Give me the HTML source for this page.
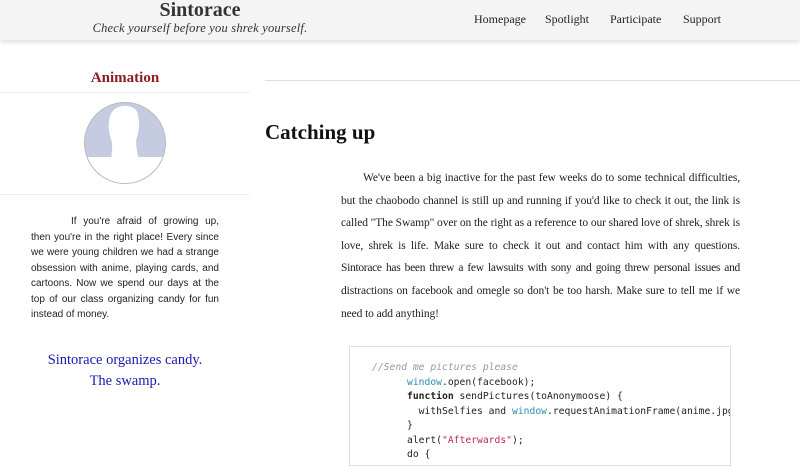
<!DOCTYPE html>
<html><head><style>
*{margin:0;padding:0;box-sizing:border-box}
body{width:800px;height:450px;overflow:hidden;background:#fff;font-family:"Liberation Serif",serif;position:relative}
.hdr{position:absolute;left:0;top:0;width:800px;height:40px;background:#f4f4f4;box-shadow:0 2px 5px rgba(0,0,0,.15)}
.t{position:absolute;left:0;width:400px;text-align:center;color:#333}
.nav{position:absolute;top:12px;font-size:12px;color:#222}
.ab{position:absolute}
.p div{text-align:justify;text-align-last:justify;white-space:nowrap}
.p div.l{text-align-last:left}
</style></head><body>
<div class="hdr">
<div class="t" style="top:-1px;font-size:20px;font-weight:bold">Sintorace</div>
<div class="t" style="top:21px;font-size:12.5px;font-style:italic;letter-spacing:.2px">Check yourself before you shrek yourself.</div>
<div class="nav" style="left:474px">Homepage</div>
<div class="nav" style="left:545px">Spotlight</div>
<div class="nav" style="left:610px">Participate</div>
<div class="nav" style="left:683px">Support</div>
</div>
<div class="ab" style="left:0;top:70px;width:250px;text-align:center;font-size:15px;font-weight:bold;color:#8b1e24">Animation</div>
<div class="ab" style="left:0;top:92px;width:250px;border-top:1px solid #eee"></div>
<svg class="ab" style="left:83px;top:101px" width="84" height="84" viewBox="0 0 84 84">
<defs><clipPath id="c"><circle cx="42" cy="42" r="40.5"/></clipPath></defs>
<g clip-path="url(#c)"><rect width="84" height="56" fill="#c5cbe0"/>
<path d="M28 60 C29 50 30 44 28 38 C26 32 25 26 26 20 C27 10 33 5 42 5 C50 5 54 8 55 14 C57 22 56 30 54 36 C52 42 54 50 56 60Z" fill="#fff"/></g>
<circle cx="42" cy="42" r="40.5" fill="none" stroke="#bbb" stroke-width="1"/></svg>
<div class="ab" style="left:0;top:194px;width:250px;border-top:1px solid #eee"></div>
<div class="ab" style="left:31px;top:214px;width:188px;font-family:'Liberation Sans',sans-serif;font-size:10px;line-height:15.5px;text-align:justify;text-indent:40px;color:#222">If you're afraid of growing up, then you're in the right place! Every since we were young children we had a strange obsession with anime, playing cards, and cartoons. Now we spend our days at the top of our class organizing candy for fun instead of money.</div>
<div class="ab" style="left:0;top:350px;width:250px;text-align:center;font-size:14.5px;line-height:21px;color:#1a1ab0">Sintorace organizes candy.<br>The swamp.</div>
<div class="ab" style="left:265px;top:80px;width:535px;border-top:1px solid #ddd"></div>
<div class="ab" style="left:265px;top:120px;font-size:21px;font-weight:bold;color:#111">Catching up</div>
<div class="ab p" style="left:341px;top:167px;width:399px;font-size:11.5px;letter-spacing:-0.1px;line-height:22.6px;color:#222">
<div style="padding-left:22px">We've been a big inactive for the past few weeks do to some technical difficulties,</div>
<div>but the chaobodo channel is still up and running if you'd like to check it out, the link is</div>
<div>called "The Swamp" over on the right as a reference to our shared love of shrek, shrek is</div>
<div>love, shrek is life. Make sure to check it out and contact him with any questions.</div>
<div style="letter-spacing:-0.3px">Sintorace has been threw a few lawsuits with sony and going threw personal issues and</div>
<div>distractions on facebook and omegle so don't be too harsh. Make sure to tell me if we</div>
<div class="l">need to add anything!</div>
</div>
<div class="ab" style="left:349px;top:346px;width:382px;height:120px;border:1px solid #ddd;overflow:hidden">
<pre style="position:absolute;left:22px;top:14px;font-family:'DejaVu Sans Mono',monospace;font-size:9.7px;line-height:14.5px;color:#222"><span style="color:#999;font-style:italic">//Send me pictures please</span>
      <span style="color:#2a8fb0">window</span>.open(facebook);
      <b>function</b> sendPictures(toAnonymoose) {
        withSelfies and <span style="color:#2a8fb0">window</span>.requestAnimationFrame(anime.jpg);
      }
      alert(<span style="color:#c0285a">"Afterwards"</span>);
      do {</pre></div>
</body></html>
